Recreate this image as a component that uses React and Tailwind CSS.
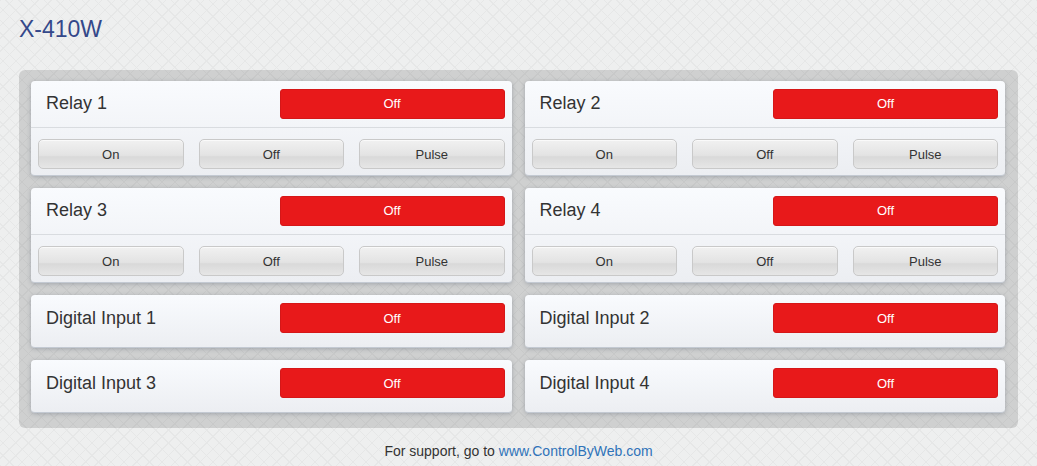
export default function App() {
  const relays = ["Relay 1", "Relay 2", "Relay 3", "Relay 4"];
  const inputs = ["Digital Input 1", "Digital Input 2", "Digital Input 3", "Digital Input 4"];
  const Bar = () => (
    <div className="w-[225px] h-[30px] mr-[7px] rounded-[3px] bg-[#e8191a] border border-[#d51718] flex items-center justify-center text-white text-[13px] pt-[1px]">
      Off
    </div>
  );
  const Btn = ({ label }) => (
    <button className="h-[30px] rounded-[5px] border border-[#c9c9c9] bg-[linear-gradient(#f1f1f1,#e3e3e3_55%,#d9d9d9_60%,#e6e6e6)] text-[13px] text-[#333] shadow-[inset_0_1px_0_#fafafa] pt-[1px]">
      {label}
    </button>
  );
  const cardCls =
    "rounded-[4px] bg-[linear-gradient(#f9fbfe,#eceef2)] shadow-[0_1px_4px_rgba(60,70,90,0.3)] border-b border-[#c3c9d2]";
  return (
    <div
      className="min-h-[466px] w-full bg-[#eeefef] bg-[image:repeating-linear-gradient(45deg,#e6e7e7_0_1px,transparent_1px_9px),repeating-linear-gradient(-45deg,#e6e7e7_0_1px,transparent_1px_9px)] px-[19px] pt-[14px]"
      style={{ fontFamily: '"Liberation Sans", Arial, sans-serif' }}
    >
      <h1 className="text-[23px] leading-[30px] text-[#34488a] h-[56px]">X-410W</h1>
      <div className="rounded-[6px] bg-black/[0.13] pt-[11px] pb-[15px] pl-[12px] pr-[13px] grid grid-cols-2 gap-x-[13px] gap-y-[12px]">
        {relays.map((r) => (
          <div key={r} className={cardCls}>
            <div className="h-[47px] pb-[1px] flex items-center justify-between pl-[15px] border-b border-[#d9dce0]">
              <span className="text-[18px] text-[#333]">{r}</span>
              <Bar />
            </div>
            <div className="grid grid-cols-3 gap-[15px] px-[7px] pt-[11px] pb-[6px]">
              <Btn label="On" />
              <Btn label="Off" />
              <Btn label="Pulse" />
            </div>
          </div>
        ))}
        {inputs.map((r) => (
          <div key={r} className={cardCls + " h-[53px]"}>
            <div className="h-[46px] flex items-center justify-between pl-[15px]">
              <span className="text-[18px] text-[#333]">{r}</span>
              <Bar />
            </div>
          </div>
        ))}
      </div>
      <div className="text-center text-[14px] text-[#333] mt-[13px] leading-[20px]">
        For support, go to <a className="text-[#2f73b9]" href="#">www.ControlByWeb.com</a>
      </div>
    </div>
  );
}
